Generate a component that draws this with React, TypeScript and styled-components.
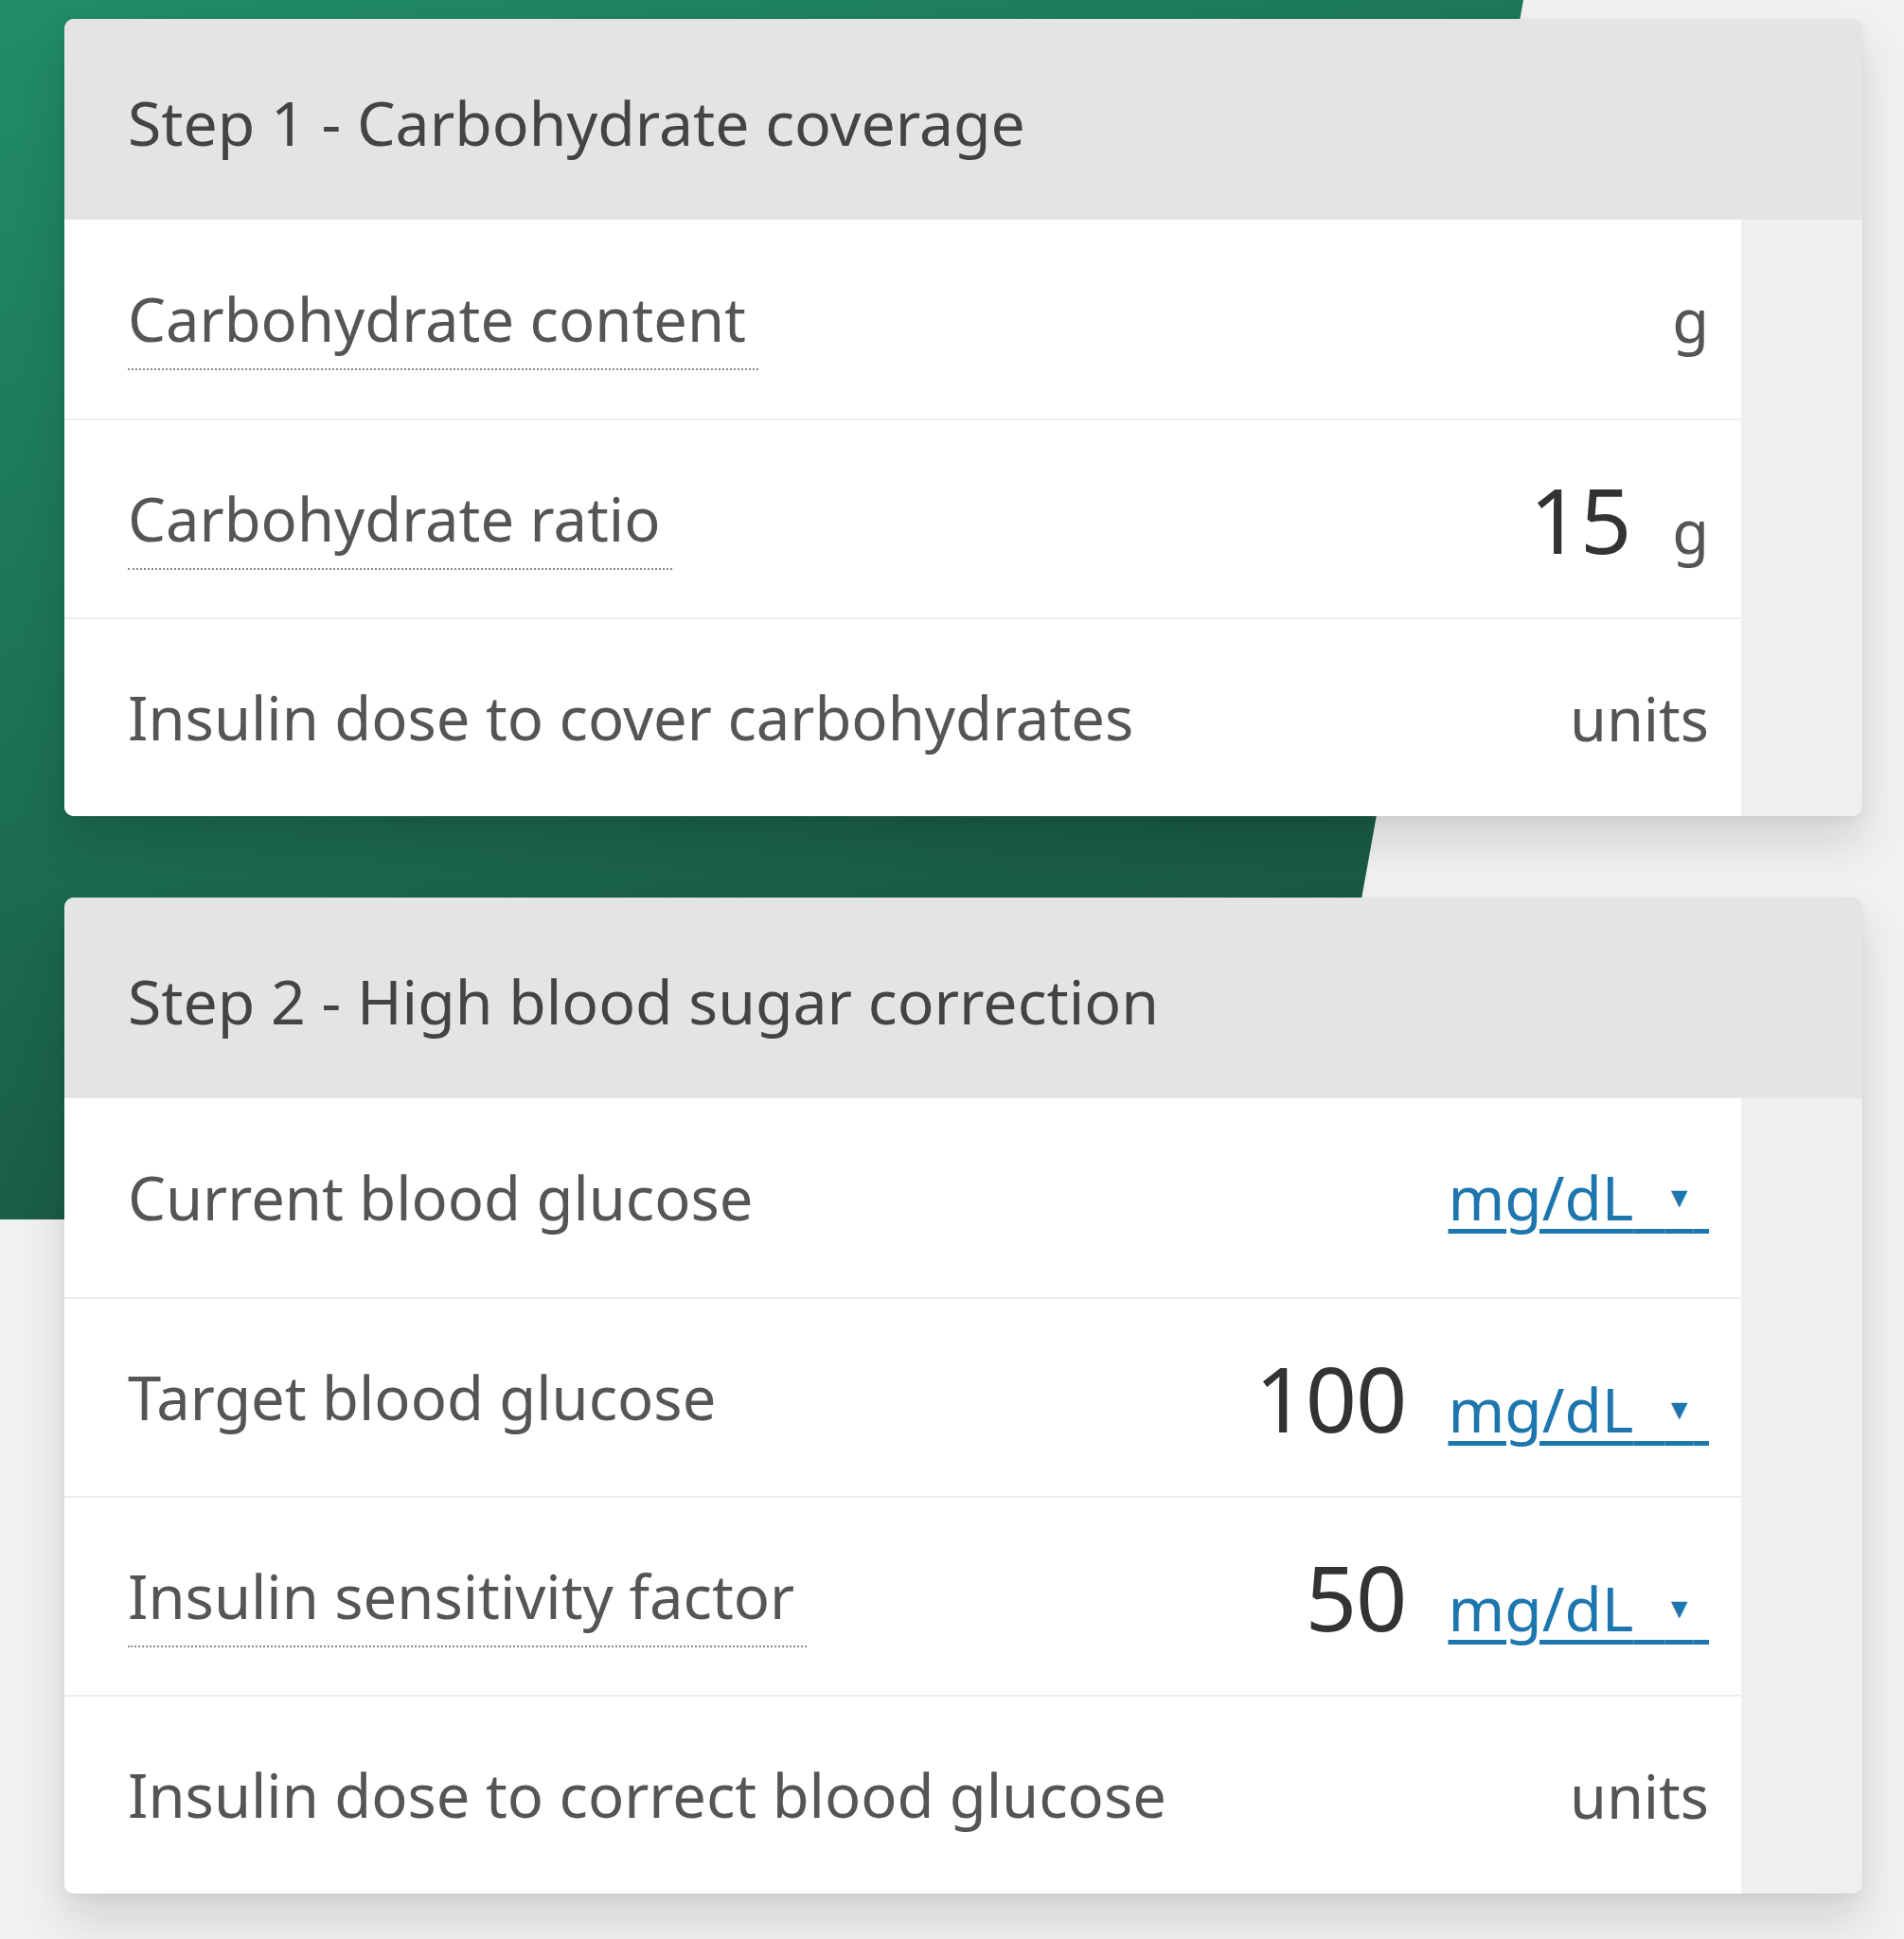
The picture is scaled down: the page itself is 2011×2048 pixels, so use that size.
import React from 'react';
import styled, { createGlobalStyle } from 'styled-components';

const GlobalStyle = createGlobalStyle`
  html, body {
    margin: 0;
    padding: 0;
    background: #f1f1f1;
  }
  body {
    font-family: 'Noto Sans', 'Open Sans', sans-serif;
  }
`;

const Page = styled.div`
  position: relative;
  width: 2011px;
  height: 2048px;
  overflow: hidden;
  background: #f1f1f1;
  box-sizing: border-box;
  padding: 20px 0 0 68px;
  display: flex;
  flex-direction: column;
  gap: 86px;

  /* green backdrop with the slanted right edge */
  &::before {
    content: '';
    position: absolute;
    top: 0;
    left: 0;
    width: 1610px;
    height: 1288px;
    background: linear-gradient(160deg, #218d67 0%, #1d7656 35%, #1a5d46 70%, #185440 100%);
    clip-path: polygon(0 0, 1609px 0, 1377px 100%, 0 100%);
    z-index: 0;
  }
`;

const Card = styled.section`
  position: relative;
  z-index: 1;
  width: 1899px;
  background: #efefef;
  border-radius: 10px;
  overflow: hidden;
  box-shadow: 0 28px 50px rgba(0, 0, 0, 0.13), 0 4px 12px rgba(0, 0, 0, 0.05);
`;

const Header = styled.h2`
  margin: 0;
  height: 212px;
  box-sizing: border-box;
  padding: 6px 0 0 67px;
  display: flex;
  align-items: center;
  background: #e4e4e4;
  color: #444;
  font-size: 64.3px;
  font-weight: 400;
`;

const Row = styled.div`
  height: 210px;
  box-sizing: border-box;
  margin-right: 128px;
  padding: 0 34px 0 67px;
  background: #fff;
  display: flex;
  align-items: center;
  justify-content: space-between;

  & + & {
    border-top: 2px solid #eeeeee;
  }
`;

const Label = styled.span<{ $dotted?: boolean }>`
  color: #555;
  font-size: 63.3px;
  line-height: 1.25;
  padding: ${(p) => (p.$dotted ? '0 13px 12px 0' : '0 0 12px 0')};
  margin-top: 14px;
  border-bottom: 2px ${(p) => (p.$dotted ? 'dotted #8a8a8a' : 'solid transparent')};
`;

const Entry = styled.div`
  display: flex;
  align-items: baseline;
  gap: 44px;
`;

const Amount = styled.span`
  color: #333;
  font-size: 95px;
  line-height: 1;
  letter-spacing: -1px;
`;

const Unit = styled.span`
  color: #555;
  font-size: 63px;
  line-height: 1;
`;

const UnitLink = styled.a`
  color: #1d76ad;
  font-size: 64px;
  line-height: 1;
  text-decoration: underline;
  text-decoration-thickness: 5px;
  text-underline-offset: 9px;
  cursor: pointer;
`;

const Caret = styled.span`
  font-size: 30px;
  vertical-align: 14px;
`;

type Line = {
  label: string;
  dotted?: boolean;
  amount?: string;
  unit: string;
  link?: boolean;
};

const step1: Line[] = [
  { label: 'Carbohydrate content', dotted: true, unit: 'g' },
  { label: 'Carbohydrate ratio', dotted: true, amount: '15', unit: 'g' },
  { label: 'Insulin dose to cover carbohydrates', unit: 'units' },
];

const step2: Line[] = [
  { label: 'Current blood glucose', unit: 'mg/dL', link: true },
  { label: 'Target blood glucose', amount: '100', unit: 'mg/dL', link: true },
  { label: 'Insulin sensitivity factor', dotted: true, amount: '50', unit: 'mg/dL', link: true },
  { label: 'Insulin dose to correct blood glucose', unit: 'units' },
];

const Step = ({ title, lines }: { title: string; lines: Line[] }) => (
  <Card>
    <Header>{title}</Header>
    {lines.map((l) => (
      <Row key={l.label}>
        <Label $dotted={l.dotted}>{l.label}</Label>
        <Entry>
          {l.amount && <Amount>{l.amount}</Amount>}
          {l.link ? (
            <UnitLink>
              {l.unit}
              {'\u00a0\u00a0'}
              <Caret>▼</Caret>
              {'\u00a0'}
            </UnitLink>
          ) : (
            <Unit>{l.unit}</Unit>
          )}
        </Entry>
      </Row>
    ))}
  </Card>
);

const App = () => (
  <>
    <GlobalStyle />
    <Page>
      <Step title="Step 1 - Carbohydrate coverage" lines={step1} />
      <Step title="Step 2 - High blood sugar correction" lines={step2} />
    </Page>
  </>
);

export default App;
